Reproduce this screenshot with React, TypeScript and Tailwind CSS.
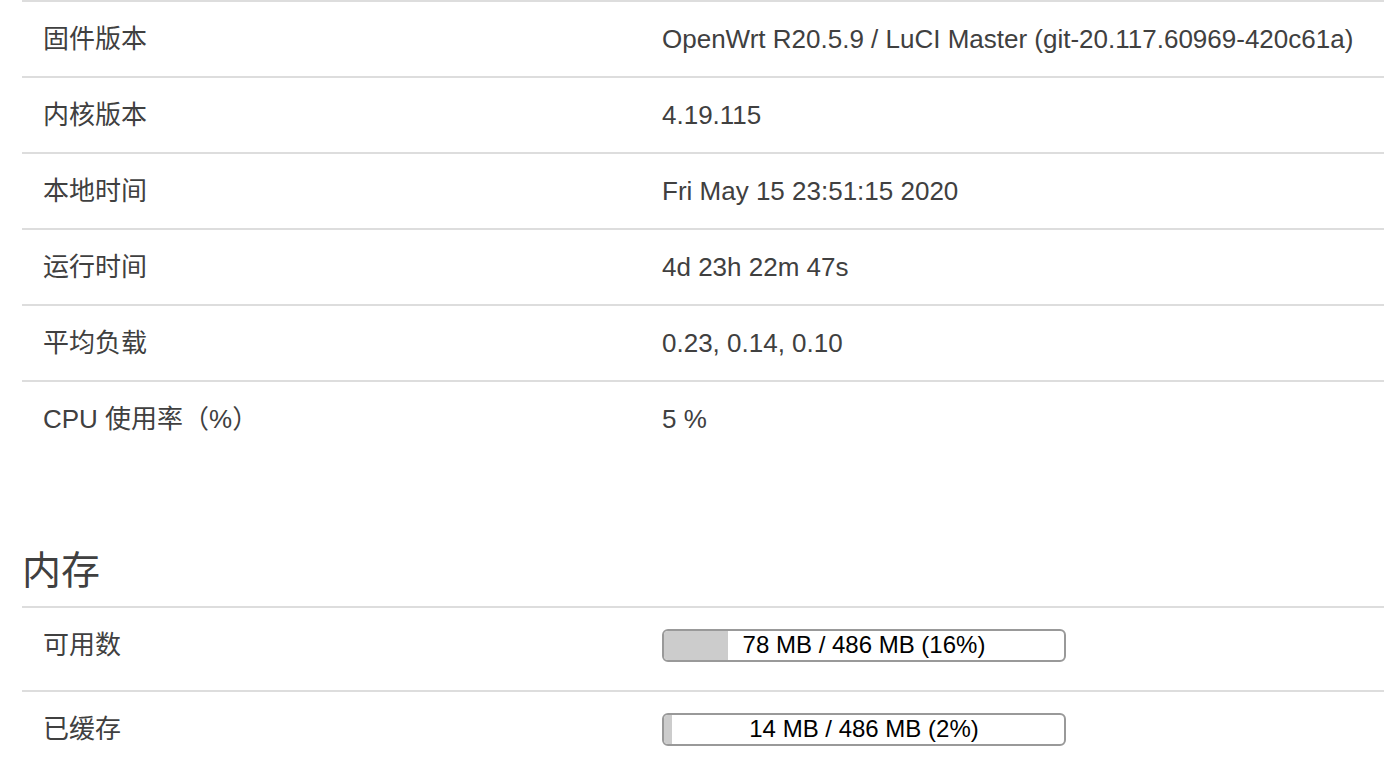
import React from "react";

type Row = { label: string; value: string };

const systemRows: Row[] = [
  { label: "固件版本", value: "OpenWrt R20.5.9 / LuCI Master (git-20.117.60969-420c61a)" },
  { label: "内核版本", value: "4.19.115" },
  { label: "本地时间", value: "Fri May 15 23:51:15 2020" },
  { label: "运行时间", value: "4d 23h 22m 47s" },
  { label: "平均负载", value: "0.23, 0.14, 0.10" },
  { label: "CPU 使用率（%）", value: "5 %" },
];

const memoryRows = [
  { label: "可用数", used: 78, total: 486, pct: 16 },
  { label: "已缓存", used: 14, total: 486, pct: 2 },
];

const font = {
  fontFamily: '"Liberation Sans", "Noto Sans CJK SC", sans-serif',
};

function ProgressBar({ used, total, pct }: { used: number; total: number; pct: number }) {
  return (
    <div className="relative h-[33px] w-[404px] overflow-hidden rounded-[6px] border-2 border-[#999] bg-white">
      <div className="h-full bg-[#ccc]" style={{ width: `${pct}%` }} />
      <div className="absolute inset-0 flex items-center justify-center text-[24px] text-black">
        {used} MB / {total} MB ({pct}%)
      </div>
    </div>
  );
}

export default function App() {
  return (
    <div className="min-h-screen overflow-hidden bg-white text-[#404040]" style={font}>
      <div className="ml-[22px] w-[1500px]">
        <div>
          {systemRows.map((row) => (
            <div key={row.label} className="flex h-[76px] items-center border-t-2 border-[#ddd] text-[26px]">
              <div className="w-[640px] pl-[21px]">{row.label}</div>
              <div>{row.value}</div>
            </div>
          ))}
        </div>

        <h3 className="mt-[87px] mb-[7px] h-[56px] text-[39px] leading-[56px] font-normal">内存</h3>

        <div>
          {memoryRows.map((row) => (
            <div key={row.label} className="flex h-[84px] items-center border-t-2 border-[#ddd] pb-[8px] text-[26px]">
              <div className="w-[640px] pl-[21px]">{row.label}</div>
              <ProgressBar used={row.used} total={row.total} pct={row.pct} />
            </div>
          ))}
        </div>
      </div>
    </div>
  );
}
